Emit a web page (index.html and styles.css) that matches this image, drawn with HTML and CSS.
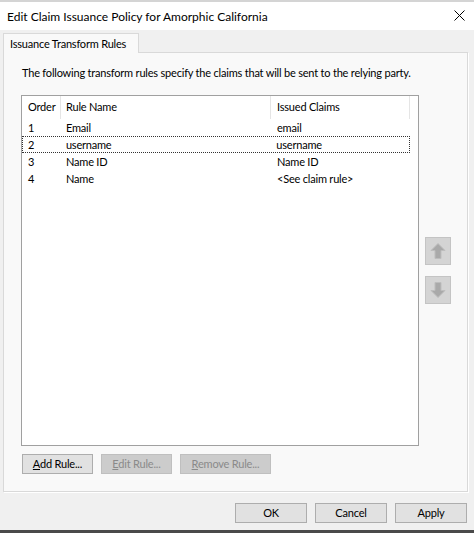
FILE: index.html
```html
<!DOCTYPE html>
<html>
<head>
<meta charset="utf-8">
<link rel="stylesheet" href="styles.css">
</head>
<body>
<div class="window">
  <div class="topstrip"></div>
  <div class="titlebar">
    <span class="title">Edit Claim Issuance Policy for Amorphic California</span>
    <svg class="close" width="11" height="11" viewBox="0 0 11 11"><path d="M0.5 0.5 L10.5 10.5 M10.5 0.5 L0.5 10.5" stroke="#000" stroke-width="1" fill="none"/></svg>
  </div>
  <div class="dialog">
    <div class="tabs"><div class="tab">Issuance Transform Rules</div></div>
    <div class="panel">
      <p class="desc">The following transform rules specify the claims that will be sent to the relying party.</p>
      <div class="listrow">
        <div class="list">
          <div class="lrow head"><div class="c1">Order</div><div class="c2">Rule Name</div><div class="c3">Issued Claims</div><div class="c4"></div></div>
          <div class="lrow"><div class="c1">1</div><div class="c2">Email</div><div class="c3">email</div></div>
          <div class="lrow focus"><div class="c1">2</div><div class="c2">username</div><div class="c3">username</div></div>
          <div class="lrow"><div class="c1">3</div><div class="c2">Name ID</div><div class="c3">Name ID</div></div>
          <div class="lrow"><div class="c1">4</div><div class="c2">Name</div><div class="c3">&lt;See claim rule&gt;</div></div>
        </div>
        <div class="arrows">
          <div class="abtn"><svg width="16" height="16" viewBox="0 0 16 16"><path d="M8 0.5 L15 7.5 L11 7.5 L11 15.5 L5 15.5 L5 7.5 L1 7.5 Z" fill="#a9a9a9" stroke="#bdbdbd" stroke-width="1"/></svg></div>
          <div class="abtn"><svg width="16" height="16" viewBox="0 0 16 16"><path d="M8 15.5 L15 8.5 L11 8.5 L11 0.5 L5 0.5 L5 8.5 L1 8.5 Z" fill="#a9a9a9" stroke="#bdbdbd" stroke-width="1"/></svg></div>
        </div>
      </div>
      <div class="btnrow">
        <div class="btn b-add"><u>A</u>dd Rule...</div>
        <div class="btn disabled b-edit"><u>E</u>dit Rule...</div>
        <div class="btn disabled b-remove"><u>R</u>emove Rule...</div>
      </div>
    </div>
    <div class="dlgbtns">
      <div class="btn dbtn">OK</div>
      <div class="btn dbtn">Cancel</div>
      <div class="btn dbtn">Apply</div>
    </div>
  </div>
  <div class="taskbar"></div>
</div>
</body>
</html>
```
FILE: styles.css
```css
html, body {
  margin: 0;
  padding: 0;
  background: #f0f0f0;
}
.window {
  width: 474px;
  height: 533px;
  display: flex;
  flex-direction: column;
  font-family: Lato, "Noto Sans", sans-serif;
  font-size: 11px;
  letter-spacing: -0.2px;
  color: #000;
  overflow: hidden;
}
.topstrip {
  height: 2px;
  background: #d4d4d4;
}
.titlebar {
  height: 28px;
  background: #fff;
  display: flex;
  align-items: center;
  justify-content: space-between;
  padding: 0 9px 0 7px;
}
.title {
  font-size: 12px;
  letter-spacing: 0;
  color: #000;
}
.close {
  display: block;
  margin-top: -2px;
}
.dialog {
  flex: 1;
  display: flex;
  flex-direction: column;
  padding: 3px 6px 0 3px;
}
.tabs {
  display: flex;
  height: 20px;
  margin-bottom: -1px;
  position: relative;
  z-index: 1;
}
.tab {
  width: 136px;
  box-sizing: border-box;
  border: 1px solid #d9d9d9;
  border-bottom: none;
  background: #f9f9f9;
  padding-left: 6px;
  line-height: 19px;
  white-space: nowrap;
}
.panel {
  height: 440px;
  box-sizing: border-box;
  border: 1px solid #d9d9d9;
  background: #f9f9f9;
  box-shadow: 1px 1px 0 #ffffff;
  padding: 12px 16px 0 17px;
  display: flex;
  flex-direction: column;
}
.desc {
  margin: 0 0 14px 1px;
  line-height: 16px;
  white-space: nowrap;
}
.listrow {
  display: flex;
  gap: 6px;
  height: 351px;
}
.list {
  width: 399px;
  box-sizing: border-box;
  border: 1px solid #a0a0a0;
  background: #fff;
  height: 351px;
}
.lrow {
  display: flex;
  height: 17px;
  line-height: 17px;
  width: 388px;
  box-sizing: border-box;
  white-space: nowrap;
}
.lrow.head {
  height: 23px;
  line-height: 22px;
  width: auto;
}
.head > div {
  border-right: 1px solid #e5e5e5;
  height: 23px;
  box-sizing: border-box;
}
.head .c4 {
  border-right: none;
  width: auto;
}
.c1 { width: 39px; padding-left: 6px; box-sizing: border-box; }
.c2 { width: 210px; padding-left: 5px; box-sizing: border-box; }
.c3 { width: 139px; padding-left: 6px; box-sizing: border-box; }
.lrow.focus {
  border: 1px dotted #333;
  line-height: 15px;
}
.lrow.focus .c1 { padding-left: 5px; width: 38px; }
.arrows {
  display: flex;
  flex-direction: column;
  gap: 11px;
  align-self: center;
  margin-top: -1px;
}
.abtn {
  width: 26px;
  height: 28px;
  box-sizing: border-box;
  background: #d4d4d4;
  border: 1px solid #c4c4c4;
  display: flex;
  align-items: center;
  justify-content: center;
}
.btnrow {
  display: flex;
  gap: 8px;
  margin-top: 8px;
  margin-left: 1px;
}
.btn {
  height: 20px;
  box-sizing: border-box;
  border: 1px solid #adadad;
  background: #e1e1e1;
  line-height: 18px;
  text-align: center;
  white-space: nowrap;
}
.btn.disabled {
  background: #cccccc;
  border-color: #bfbfbf;
  color: #8a8a8a;
}
.b-add { width: 71px; }
.b-edit { width: 71px; }
.b-remove { width: 91px; }
.dlgbtns {
  display: flex;
  justify-content: flex-end;
  gap: 8px;
  margin-top: 11px;
  padding-right: 1px;
}
.dbtn { width: 72px; }
.taskbar {
  height: 3px;
  background: #4a4a4a;
  margin-top: auto;
}
```
